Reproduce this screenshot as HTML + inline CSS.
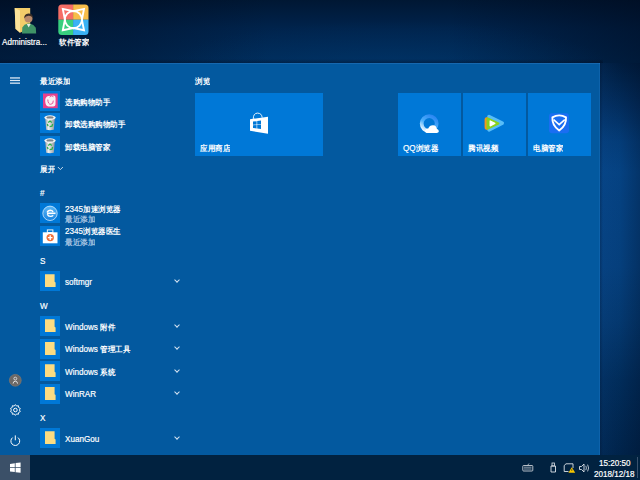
<!DOCTYPE html>
<html><head><meta charset="utf-8">
<style>
*{margin:0;padding:0;box-sizing:border-box}
html,body{width:640px;height:480px;overflow:hidden}
body{position:relative;font-family:"Liberation Sans",sans-serif;color:#fff;-webkit-text-stroke:0.2px #fff;background:#03193a}
.abs{position:absolute}
#top{position:absolute;left:0;top:0;width:640px;height:63px;
 background:
  radial-gradient(ellipse 220px 45px at 390px 66px, rgba(0,62,120,0.35), rgba(0,62,120,0)),
  linear-gradient(90deg, rgba(0,8,25,0.45) 0%, rgba(0,8,25,0.3) 20%, rgba(0,8,25,0) 42%, rgba(0,8,25,0) 70%, rgba(0,8,25,0.5) 100%),
  linear-gradient(180deg,#001733 0%,#00234c 45%,#002c5a 100%);}
#right{position:absolute;left:600px;top:63px;width:40px;height:392px;
 background:linear-gradient(180deg,#001c3e 0%,#022b5a 10%,#043c78 20%,#054282 28%,#053f7c 52%,#04386f 66%,#012c5a 81%,#00234a 100%)}
#redge{position:absolute;left:600px;top:60px;width:3px;height:395px;background:linear-gradient(90deg,rgba(0,10,30,0.25),rgba(0,10,30,0))}
#tedge{position:absolute;left:0;top:59px;width:603px;height:4px;background:linear-gradient(180deg,rgba(0,10,30,0),rgba(0,10,30,0.35))}
#iedge{position:absolute;left:599px;top:63px;width:1px;height:392px;background:rgba(60,140,220,0.2)}
#menu{position:absolute;left:0;top:63px;width:600px;height:392px;background:#03599f}
#taskbar{position:absolute;left:0;top:455px;width:640px;height:25px;background:#012240}
#startbtn{position:absolute;left:0;top:455px;width:30px;height:25px;background:#3b5068}
.tx{position:absolute;font-size:8px;line-height:10px;white-space:nowrap;color:#fff}
.row{position:absolute;left:40px;width:150px;height:20px}
.ic{position:absolute;left:0;top:0;width:20px;height:20px;background:#0078d7}
.lbl{position:absolute;left:25px;top:0.5px;font-size:8px;line-height:20px;white-space:nowrap;color:#fff}
.hdr{position:absolute;font-size:8px;line-height:10px;left:40px;color:#fff;white-space:nowrap}
.fold{position:absolute;left:5px;top:3.3px;width:10.6px;height:13.1px;background:#fbdc82;clip-path:polygon(0 0,9.6px 0,9.6px 7.5px,10.6px 8.3px,10.6px 13.1px,0 13.1px)}
.chev{position:absolute;left:134.5px;top:6.5px;width:4px;height:4px;border-right:1px solid #d6e4f2;border-bottom:1px solid #d6e4f2;transform:rotate(45deg)}
.tile{position:absolute;top:93px;height:62.5px;background:#0078d7}
.tl{position:absolute;left:5px;top:50px;font-size:8px;line-height:10px;white-space:nowrap}
.c{display:inline-block;font-size:8px;transform:scaleX(1.0417);transform-origin:0 50%;position:relative;top:0;font-weight:600;-webkit-text-stroke:0}
.tx,.lbl,.hdr,.tl{font-size:9px !important;transform:scaleX(0.9);transform-origin:0 50%}
</style></head><body>
<div id="top"></div>
<div id="right"></div><div class="abs" style="left:600px;top:63px;width:40px;height:392px;background:linear-gradient(90deg,rgba(20,90,170,0.12) 0%,rgba(0,10,30,0) 50%,rgba(0,10,30,0.25) 100%)"></div><div id="redge"></div><div id="tedge"></div>

<!-- desktop icons -->
<svg class="abs" style="left:0;top:0" width="100" height="40" viewBox="0 0 100 40">
  <!-- folder -->
  <path d="M14.7 8 L30.2 8 L30.2 28 L20 32.8 L15.5 29 Z" fill="#f2cd6a"/>
  <path d="M14.7 8 L20 10.5 L20 32.8 L15.6 28.5 Z" fill="#fbe39a"/>
  <!-- person -->
  <path d="M22 33.6 L22.3 27.5 Q24 24.3 27.8 23.6 L29.8 23.6 Q34 24.5 35.8 27.8 L36.2 33.6 Z" fill="#3f9366"/>
  <path d="M26.8 24 L28.7 27.5 L30.6 24 Z" fill="#e8efe8"/>
  <circle cx="28.5" cy="18.6" r="4" fill="#b98a6b"/>
  <path d="M24.3 18.5 Q23.8 13.6 28.5 13.4 Q33.4 13.5 32.8 18.6 Q32 16 28.6 15.8 Q25.4 16 24.3 18.5 Z" fill="#3b2f27"/>
  <!-- softmgr -->
  <clipPath id="rr"><rect x="58.3" y="4.4" width="30.2" height="30.5" rx="3.5"/></clipPath>
  <g clip-path="url(#rr)">
    <rect x="58" y="4" width="15.2" height="15.8" fill="#f66e66"/>
    <rect x="73.1" y="4" width="16" height="15.8" fill="#f7bd4a"/>
    <rect x="58" y="19.7" width="15.2" height="16" fill="#38cf7e"/>
    <rect x="73.1" y="19.7" width="16" height="16" fill="#3ab2f5"/>
  </g>
  <g fill="none" stroke="#fff" stroke-width="1.9" stroke-linejoin="miter">
    <path d="M62.8 8.9 L73.4 11.2 L84 8.9 L81.9 19.6 L84 30.3 L73.4 28 L62.8 30.3 L64.9 19.6 Z"/>
    <circle cx="73.4" cy="19.6" r="8.6"/>
  </g>
</svg>
<div class="tx" style="left:2px;top:37px">Administra...</div>
<div class="tx" style="left:58.5px;top:37px"><span class="c">软件管家</span></div>

<div id="menu"></div><div id="iedge"></div><div class="abs" style="left:0;top:63px;width:600px;height:1px;background:rgba(90,160,230,0.22)"></div>

<!-- left rail -->
<svg class="abs" style="left:0;top:70px" width="30" height="20"><rect x="10" y="7.3" width="10" height="1.3" fill="#dce8f5"/><rect x="10" y="9.9" width="10" height="1.2" fill="#dce8f5"/><rect x="10" y="12.5" width="10" height="1.3" fill="#dce8f5"/></svg>
<svg class="abs" style="left:0;top:365px" width="30" height="90" viewBox="0 0 30 90">
  <circle cx="15.3" cy="15.3" r="5.9" fill="#6c6866" stroke="#86786c" stroke-width="0.7"/>
  <circle cx="15.3" cy="13.6" r="1.45" fill="none" stroke="#e0e0e0" stroke-width="0.9"/>
  <path d="M13.1 18.6 A2.2 2.4 0 0 1 17.5 18.6" fill="none" stroke="#e0e0e0" stroke-width="1"/>
  <circle cx="15.4" cy="45" r="1.8" fill="none" stroke="#fff" stroke-width="1"/>
  <path d="M15.4 39.6 L16.6 41.1 L18.4 40.7 L18.6 42.5 L20.3 43.4 L19.4 45 L20.3 46.6 L18.6 47.5 L18.4 49.3 L16.6 48.9 L15.4 50.4 L14.2 48.9 L12.4 49.3 L12.2 47.5 L10.5 46.6 L11.4 45 L10.5 43.4 L12.2 42.5 L12.4 40.7 L14.2 41.1 Z" fill="none" stroke="#fff" stroke-width="0.9"/>
  <path d="M12.6 72.6 A4.4 4.4 0 1 0 18 72.6" fill="none" stroke="#fff" stroke-width="1"/>
  <path d="M15.3 70.4 L15.3 75.3" stroke="#fff" stroke-width="1"/>
</svg>

<div class="hdr" style="top:75.5px"><span class="c">最近添加</span></div>

<div class="row" style="top:91px"><div class="ic">
  <svg width="20" height="20" viewBox="0 0 20 20"><rect x="3" y="2.5" width="14.7" height="14.7" fill="#e8408c"/>
  <path d="M5.2 10 Q5 5.8 8.5 5 L13.5 4.6 Q15.6 4.6 15.6 7 L15.5 13.5 Q15.4 15.6 13.2 15.6 L8.5 15.6 Q5.3 15.2 5.2 10 Z" fill="#f8f2f5"/>
  <path d="M9.5 6.2 Q11.5 3.8 13.5 5.8" fill="none" stroke="#e8408c" stroke-width="0.8"/>
  <path d="M7.8 8.5 Q8 13.3 10.8 13.3 Q13.4 13.2 13.3 9.6" fill="none" stroke="#e8408c" stroke-width="0.9"/></svg>
</div><div class="lbl"><span class="c">选购购物助手</span></div></div>
<div class="row" style="top:113px"><div class="ic">
  <svg width="20" height="20" viewBox="0 0 20 20"><defs><linearGradient id="can" x1="0" x2="1"><stop offset="0" stop-color="#9aa1a6"/><stop offset="0.35" stop-color="#eef0f1"/><stop offset="1" stop-color="#8d959a"/></linearGradient></defs><path d="M5.2 5.5 L14.8 5.5 L13.8 16.8 Q10 17.6 6.2 16.8 Z" fill="url(#can)"/><ellipse cx="10" cy="4.6" rx="5.6" ry="2.3" fill="#f2f3f4"/><ellipse cx="10" cy="4.4" rx="3.6" ry="1.2" fill="#7d858a"/><path d="M8.2 9.6 L10 8 L11.8 9.6 M12.6 11 L12 13.2 L9.6 13.6 M7.4 11 L8 13.2" fill="none" stroke="#2fae49" stroke-width="1.3"/></svg>
</div><div class="lbl"><span class="c">卸载选购购物助手</span></div></div>
<div class="row" style="top:136px"><div class="ic">
  <svg width="20" height="20" viewBox="0 0 20 20"><defs><linearGradient id="can" x1="0" x2="1"><stop offset="0" stop-color="#9aa1a6"/><stop offset="0.35" stop-color="#eef0f1"/><stop offset="1" stop-color="#8d959a"/></linearGradient></defs><path d="M5.2 5.5 L14.8 5.5 L13.8 16.8 Q10 17.6 6.2 16.8 Z" fill="url(#can)"/><ellipse cx="10" cy="4.6" rx="5.6" ry="2.3" fill="#f2f3f4"/><ellipse cx="10" cy="4.4" rx="3.6" ry="1.2" fill="#7d858a"/><path d="M8.2 9.6 L10 8 L11.8 9.6 M12.6 11 L12 13.2 L9.6 13.6 M7.4 11 L8 13.2" fill="none" stroke="#2fae49" stroke-width="1.3"/></svg>
</div><div class="lbl"><span class="c">卸载电脑管家</span></div></div>

<div class="hdr" style="top:164px"><span class="c">展开</span></div>
<svg class="abs" style="left:56px;top:165px" width="8" height="6"><path d="M1.9 2 L4.4 4.6 L6.9 2" fill="none" stroke="#d6e4f2" stroke-width="0.9"/></svg>

<div class="hdr" style="top:188px">#</div>
<div class="row" style="top:203px"><div class="ic">
  <svg width="20" height="20" viewBox="0 0 20 20"><defs><linearGradient id="eg" x1="0" y1="0" x2="0" y2="1"><stop offset="0" stop-color="#5bb8f8"/><stop offset="1" stop-color="#1783e0"/></linearGradient></defs><circle cx="10" cy="10.3" r="7.2" fill="url(#eg)" stroke="#e8f4ff" stroke-width="0.7"/>
  <path d="M7 10.3 L15.5 10.3" stroke="#fff" stroke-width="1.6"/><path d="M7.2 9.6 Q8 7.3 10.5 7.3 Q12.6 7.4 13 9" fill="none" stroke="#fff" stroke-width="1.5"/><path d="M7.3 11.2 Q8.2 13.4 10.5 13.4 Q12.3 13.4 13.2 12.4" fill="none" stroke="#fff" stroke-width="1.4"/></svg>
</div>
<div class="tx" style="left:25px;top:0.8px">2345<span class="c">加速浏览器</span></div>
<div class="tx" style="left:25px;top:11px;color:#a6c4e2"><span class="c">最近添加</span></div></div>
<div class="row" style="top:225.5px"><div class="ic">
  <svg width="20" height="20" viewBox="0 0 20 20"><rect x="2.8" y="6.3" width="14.7" height="11" fill="#fff"/><rect x="7.3" y="3.9" width="5.6" height="2.6" fill="none" stroke="#fff" stroke-width="0.9"/>
  <circle cx="10.2" cy="11.6" r="3.7" fill="#f2703a"/><path d="M10.2 9.3 V13.9 M7.9 11.6 H12.5" stroke="#fff" stroke-width="1.4"/></svg>
</div>
<div class="tx" style="left:25px;top:0.8px">2345<span class="c">浏览器医生</span></div>
<div class="tx" style="left:25px;top:11px;color:#a6c4e2"><span class="c">最近添加</span></div></div>

<div class="hdr" style="top:256px">S</div>
<div class="row" style="top:271px"><div class="ic"><div class="fold"></div></div><div class="lbl">softmgr</div><div class="chev"></div></div>

<div class="hdr" style="top:300.5px">W</div>
<div class="row" style="top:316px"><div class="ic"><div class="fold"></div></div><div class="lbl">Windows <span class="c">附件</span></div><div class="chev"></div></div>
<div class="row" style="top:338.5px"><div class="ic"><div class="fold"></div></div><div class="lbl">Windows <span class="c">管理工具</span></div><div class="chev"></div></div>
<div class="row" style="top:361px"><div class="ic"><div class="fold"></div></div><div class="lbl">Windows <span class="c">系统</span></div><div class="chev"></div></div>
<div class="row" style="top:383.5px"><div class="ic"><div class="fold"></div></div><div class="lbl">WinRAR</div><div class="chev"></div></div>

<div class="hdr" style="top:413px">X</div>
<div class="row" style="top:428px"><div class="ic"><div class="fold"></div></div><div class="lbl">XuanGou</div><div class="chev"></div></div>

<!-- tiles -->
<div class="hdr" style="left:195px;top:75.5px"><span class="c">浏览</span></div>
<div class="tile" style="left:195px;width:128px"><div class="tl"><span class="c">应用商店</span></div></div>
<div class="tile" style="left:398px;width:62.5px"><div class="tl">QQ<span class="c">浏览器</span></div></div>
<div class="tile" style="left:463px;width:62.5px"><div class="tl"><span class="c">腾讯视频</span></div></div>
<div class="tile" style="left:528px;width:62.5px"><div class="tl"><span class="c">电脑管家</span></div></div>
<svg class="abs" style="left:0;top:0" width="640" height="160" viewBox="0 0 640 160">
  <!-- store -->
  <path d="M253.3 118.9 Q253.2 113.3 257.5 113.1 Q261.8 113.2 262.2 117.7" fill="none" stroke="#fff" stroke-width="0.9"/>
  <path d="M250 119.2 L268 116.7 L268 133.8 L250 130.8 Z" fill="#fff"/>
  <path d="M253 121.6 L256.6 121.2 L256.6 124.5 L253 124.7 Z M257.2 121.1 L261 120.6 L261 124.4 L257.2 124.5 Z M253 125.2 L256.6 125.1 L256.6 128.4 L253 128 Z M257.2 125.1 L261 125.1 L261 128.9 L257.2 128.5 Z" fill="#0078d7"/>
  <!-- qq browser -->
  <defs><linearGradient id="qg" x1="0.8" y1="0" x2="0.2" y2="1"><stop offset="0" stop-color="#2a86f2"/><stop offset="0.55" stop-color="#4cb0fb"/><stop offset="1" stop-color="#f0f8ff"/></linearGradient></defs>
  <circle cx="429.2" cy="123.6" r="7.5" fill="none" stroke="url(#qg)" stroke-width="3.8"/>
  <path d="M427 132.9 Q424.6 132.5 425.2 130.2 Q425.8 128.4 428.2 128.6 Q429.5 125 433.2 125.2 Q436.4 125.6 436.8 128.8 Q439.2 129.6 438.8 131.8 Q438.4 133 436.5 132.9 Z" fill="#fff"/>
  <!-- tencent video -->
  <path d="M489 116.6 L502.2 123.2 L489 129.8 Z" fill="#58bdf8" stroke="#58bdf8" stroke-width="3.6" stroke-linejoin="round"/>
  <path d="M486.5 117.2 Q484.6 117.2 484.6 120 L484.6 127 Q484.6 129.8 486.5 129.8 L488 129.8 L488 117.2 Z" fill="#f7941d"/>
  <path d="M487.6 118.6 L498.4 123.4 L487.6 128.4 Z" fill="#8ad11f" stroke="#8ad11f" stroke-width="2.2" stroke-linejoin="round"/>
  <path d="M490.2 121 L494.8 123.4 L490.2 125.8 Z" fill="#fff" stroke="#fff" stroke-width="1.3" stroke-linejoin="round"/>
  <!-- pc manager -->
  <rect x="549" y="113.3" width="20" height="20" rx="3" fill="#1a6ef2"/>
  <path d="M552.4 117.4 Q559.2 113.4 566 117.4 Q566.6 125.2 559.2 130.6 Q551.8 125.2 552.4 117.4 Z" fill="none" stroke="#fff" stroke-width="1.9" stroke-linejoin="round"/>
  <path d="M553.6 119.6 L559.2 124.6 L564.8 119.6" fill="none" stroke="#fff" stroke-width="1.6"/>
</svg>

<div id="taskbar"></div>
<div id="startbtn"></div>
<svg class="abs" style="left:0;top:455px" width="640" height="25" viewBox="0 0 640 25">
  <path d="M10 8.9 L14.8 8.2 L14.8 12.3 L10 12.3 Z M15.6 8.1 L20.6 7.5 L20.6 12.3 L15.6 12.3 Z M10 13 L14.8 13 L14.8 17.1 L10 16.5 Z M15.6 13 L20.6 13 L20.6 17.8 L15.6 17.2 Z" fill="#fff"/>
  <!-- keyboard -->
  <rect x="522.8" y="10.5" width="10" height="5.5" rx="0.8" fill="none" stroke="#c9cfd6" stroke-width="0.9"/>
  <path d="M524 12.2 H531.5 M524 14 H531.5" stroke="#c9cfd6" stroke-width="0.7"/>
  <path d="M527.5 10.5 L529 8.5" stroke="#c9cfd6" stroke-width="0.8"/>
  <!-- usb -->
  <path d="M551 11 L551 17 L555.5 17 L555.5 11 Z" fill="none" stroke="#dfe4ea" stroke-width="0.9"/>
  <rect x="552" y="8" width="2.5" height="3" fill="none" stroke="#dfe4ea" stroke-width="0.8"/>
  <!-- network -->
  <path d="M564.2 10.5 L564.2 16.5 L568.5 16.5 M564.2 10.5 L566 8.8 L573 8.8 L573 13" fill="none" stroke="#dfe4ea" stroke-width="0.9"/>
  <path d="M571.8 12.2 L575.2 17.8 L568.4 17.8 Z" fill="#f7c600"/><path d="M571.8 14 V16" stroke="#222" stroke-width="0.6"/>
  <!-- volume -->
  <path d="M579.5 11.5 L581.5 11.5 L584 9 L584 17 L581.5 14.5 L579.5 14.5 Z" fill="none" stroke="#dfe4ea" stroke-width="0.9"/>
  <path d="M585.8 10.8 Q587 13 585.8 15.2 M587.6 9.6 Q589.6 13 587.6 16.4" fill="none" stroke="#dfe4ea" stroke-width="0.8"/>
  <rect x="637" y="2" width="1" height="21" fill="#39526e"/>
</svg>
<div class="tx" style="left:598.5px;top:457.5px">15:20:50</div>
<div class="tx" style="left:593.5px;top:468.5px">2018/12/18</div>
</body></html>
